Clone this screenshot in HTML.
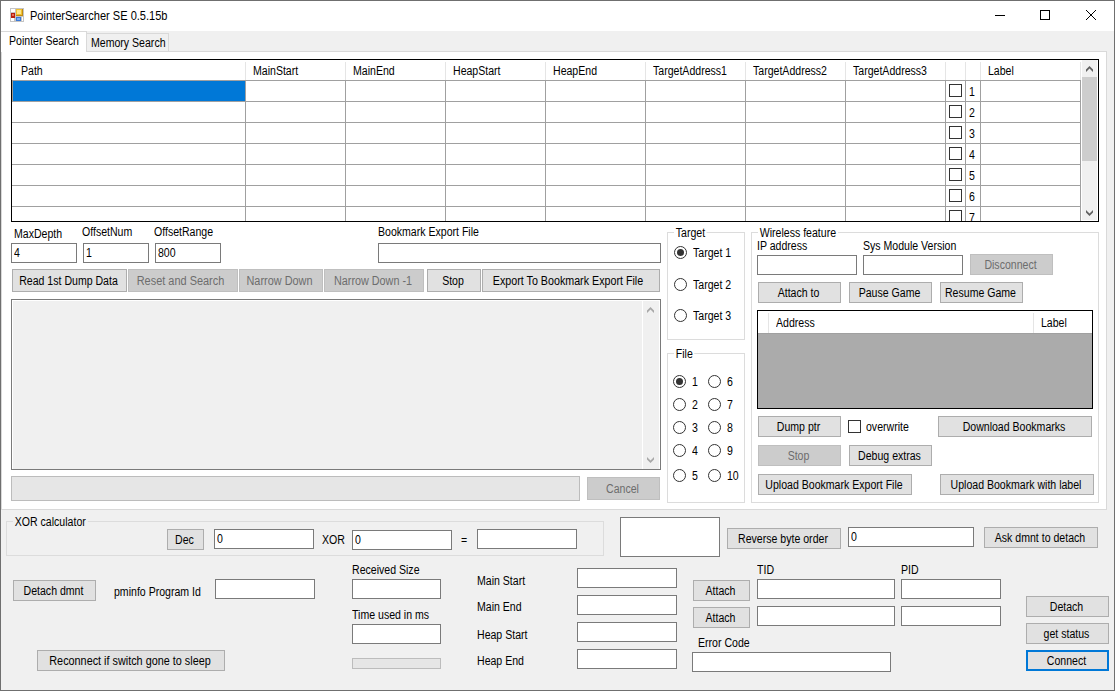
<!DOCTYPE html><html><head><meta charset="utf-8"><style>
*{margin:0;padding:0;box-sizing:border-box}
html,body{width:1115px;height:691px;overflow:hidden;background:#f0f0f0;font-family:"Liberation Sans",sans-serif;font-size:12px;color:#000}
div{position:absolute}
.t{white-space:nowrap;line-height:14px;transform:scaleX(.88);transform-origin:0 0}
.b{background:#e1e1e1;border:1px solid #adadad}
.b span{position:absolute;left:-21px;right:-19px;text-align:center;white-space:nowrap;line-height:14px;transform:scaleX(.88)}
.b.dis{background:#cccccc;border-color:#bfbfbf;color:#6d6d6d}
.b.focus{border:2px solid #0078d7}
.tb{background:#fff;border:1px solid #7a7a7a}
.tb span{position:absolute;left:2px;line-height:14px;white-space:nowrap;transform:scaleX(.88);transform-origin:0 0}
.g{border:1px solid #dcdcdc}
.r{width:13px;height:13px;border:1px solid #333;border-radius:50%;background:#fff}
.r.on::after{content:"";position:absolute;left:2px;top:2px;width:7px;height:7px;border-radius:50%;background:#333}
.cb{width:13px;height:13px;border:1px solid #333;background:#fff}
</style></head><body>

<div class="" style="left:0px;top:0px;width:1115px;height:31px;background:#fff"></div>
<svg style="position:absolute;left:10px;top:8px" width="14" height="14" viewBox="0 0 14 14" shape-rendering="crispEdges">
<rect x="0" y="0" width="14" height="14" fill="#c4c4c4"/>
<rect x="1" y="1" width="4" height="3" fill="#fff"/><rect x="1" y="10" width="3" height="3" fill="#fff"/><rect x="12" y="9" width="1" height="4" fill="#fff"/>
<rect x="1" y="5" width="4" height="5" fill="#b8200f"/><rect x="2" y="6" width="2" height="2" fill="#e8705a"/>
<rect x="6" y="1" width="7" height="7" fill="#c08a10"/><rect x="6" y="1" width="6" height="6" fill="#f0c030"/><rect x="7" y="2" width="4" height="4" fill="#fde68a"/>
<rect x="6" y="9" width="5" height="4" fill="#3a78d8"/><rect x="7" y="10" width="3" height="2" fill="#7fb0f0"/>
</svg>
<div class="t" style="left:30px;top:9px;transform:scaleX(.92)">PointerSearcher SE 0.5.15b</div>
<div class="" style="left:995px;top:15px;width:10px;height:1px;background:#000"></div>
<div class="" style="left:1040px;top:10px;width:10px;height:10px;border:1px solid #000"></div>
<svg style="position:absolute;left:1086px;top:10px" width="10" height="10" viewBox="0 0 10 10" shape-rendering="crispEdges"><path d="M0 0h1v1h-1zM9 0h1v1h-1zM1 1h1v1h-1zM8 1h1v1h-1zM2 2h1v1h-1zM7 2h1v1h-1zM3 3h1v1h-1zM6 3h1v1h-1zM4 4h1v1h-1zM5 4h1v1h-1zM5 5h1v1h-1zM4 5h1v1h-1zM6 6h1v1h-1zM3 6h1v1h-1zM7 7h1v1h-1zM2 7h1v1h-1zM8 8h1v1h-1zM1 8h1v1h-1zM9 9h1v1h-1zM0 9h1v1h-1z" fill="#000"/></svg>
<div class="" style="left:1px;top:51px;width:1106px;height:459px;background:#fff;border:1px solid #d9d9d9"></div>
<div class="" style="left:1px;top:31px;width:86px;height:21px;background:#fff;border-top:1px solid #d9d9d9;border-right:1px solid #d9d9d9"></div>
<div class="" style="left:86px;top:33px;width:83px;height:18px;background:#f0f0f0;border:1px solid #d9d9d9;border-bottom:none"></div>
<div class="" style="left:1px;top:51px;width:85px;height:1px;background:#fff"></div>
<div class="t" style="left:9px;top:34px;">Pointer Search</div>
<div class="t" style="left:91px;top:36px;">Memory Search</div>
<div class="" style="left:11px;top:59px;width:1088px;height:163px;background:#fff;border:1px solid #000;overflow:hidden"></div>
<div class="" style="left:12px;top:80px;width:1069px;height:1px;background:#a0a0a0"></div>
<div class="" style="left:245px;top:62px;width:1px;height:18px;background:#e5e5e5"></div>
<div class="" style="left:245px;top:81px;width:1px;height:140px;background:#a0a0a0"></div>
<div class="" style="left:345px;top:62px;width:1px;height:18px;background:#e5e5e5"></div>
<div class="" style="left:345px;top:81px;width:1px;height:140px;background:#a0a0a0"></div>
<div class="" style="left:445px;top:62px;width:1px;height:18px;background:#e5e5e5"></div>
<div class="" style="left:445px;top:81px;width:1px;height:140px;background:#a0a0a0"></div>
<div class="" style="left:545px;top:62px;width:1px;height:18px;background:#e5e5e5"></div>
<div class="" style="left:545px;top:81px;width:1px;height:140px;background:#a0a0a0"></div>
<div class="" style="left:645px;top:62px;width:1px;height:18px;background:#e5e5e5"></div>
<div class="" style="left:645px;top:81px;width:1px;height:140px;background:#a0a0a0"></div>
<div class="" style="left:745px;top:62px;width:1px;height:18px;background:#e5e5e5"></div>
<div class="" style="left:745px;top:81px;width:1px;height:140px;background:#a0a0a0"></div>
<div class="" style="left:845px;top:62px;width:1px;height:18px;background:#e5e5e5"></div>
<div class="" style="left:845px;top:81px;width:1px;height:140px;background:#a0a0a0"></div>
<div class="" style="left:945px;top:62px;width:1px;height:18px;background:#e5e5e5"></div>
<div class="" style="left:945px;top:81px;width:1px;height:140px;background:#a0a0a0"></div>
<div class="" style="left:965px;top:62px;width:1px;height:18px;background:#e5e5e5"></div>
<div class="" style="left:965px;top:81px;width:1px;height:140px;background:#a0a0a0"></div>
<div class="" style="left:980px;top:62px;width:1px;height:18px;background:#e5e5e5"></div>
<div class="" style="left:980px;top:81px;width:1px;height:140px;background:#a0a0a0"></div>
<div class="" style="left:1080px;top:62px;width:1px;height:18px;background:#e5e5e5"></div>
<div class="" style="left:1080px;top:81px;width:1px;height:140px;background:#a0a0a0"></div>
<div class="" style="left:12px;top:101px;width:1069px;height:1px;background:#a0a0a0"></div>
<div class="" style="left:12px;top:122px;width:1069px;height:1px;background:#a0a0a0"></div>
<div class="" style="left:12px;top:143px;width:1069px;height:1px;background:#a0a0a0"></div>
<div class="" style="left:12px;top:164px;width:1069px;height:1px;background:#a0a0a0"></div>
<div class="" style="left:12px;top:185px;width:1069px;height:1px;background:#a0a0a0"></div>
<div class="" style="left:12px;top:206px;width:1069px;height:1px;background:#a0a0a0"></div>
<div class="" style="left:12px;top:81px;width:1px;height:20px;background:#a09a90"></div>
<div class="" style="left:13px;top:81px;width:232px;height:20px;background:#0078d7"></div>
<div class="t" style="left:21px;top:64px;">Path</div>
<div class="t" style="left:253px;top:64px;">MainStart</div>
<div class="t" style="left:353px;top:64px;">MainEnd</div>
<div class="t" style="left:453px;top:64px;">HeapStart</div>
<div class="t" style="left:553px;top:64px;">HeapEnd</div>
<div class="t" style="left:653px;top:64px;">TargetAddress1</div>
<div class="t" style="left:753px;top:64px;">TargetAddress2</div>
<div class="t" style="left:853px;top:64px;">TargetAddress3</div>
<div class="t" style="left:988px;top:64px;">Label</div>
<div class="cb" style="left:949px;top:84px"></div>
<div style="left:966px;top:81px;width:14px;height:20px;overflow:hidden"><div class="t" style="left:3px;top:4px">1</div></div>
<div class="cb" style="left:949px;top:105px"></div>
<div style="left:966px;top:102px;width:14px;height:20px;overflow:hidden"><div class="t" style="left:3px;top:4px">2</div></div>
<div class="cb" style="left:949px;top:126px"></div>
<div style="left:966px;top:123px;width:14px;height:20px;overflow:hidden"><div class="t" style="left:3px;top:4px">3</div></div>
<div class="cb" style="left:949px;top:147px"></div>
<div style="left:966px;top:144px;width:14px;height:20px;overflow:hidden"><div class="t" style="left:3px;top:4px">4</div></div>
<div class="cb" style="left:949px;top:168px"></div>
<div style="left:966px;top:165px;width:14px;height:20px;overflow:hidden"><div class="t" style="left:3px;top:4px">5</div></div>
<div class="cb" style="left:949px;top:189px"></div>
<div style="left:966px;top:186px;width:14px;height:20px;overflow:hidden"><div class="t" style="left:3px;top:4px">6</div></div>
<div style="left:949px;top:210px;width:13px;height:11px;border:1px solid #333;border-bottom:none;background:#fff"></div>
<div style="left:966px;top:207px;width:14px;height:14px;overflow:hidden"><div class="t" style="left:3px;top:4px">7</div></div>
<div class="" style="left:1081px;top:60px;width:17px;height:160px;background:#f0f0f0;border-left:1px solid #fff;border-right:1px solid #fff"></div>
<div class="" style="left:1082px;top:77px;width:15px;height:84px;background:#cdcdcd"></div>
<svg style="position:absolute;left:1086px;top:66px" width="7" height="6" viewBox="0 0 7 6"><polygon points="0,3.5 3.5,0 7,3.5 7,6 3.5,2.5 0,6" fill="#606060"/></svg>
<svg style="position:absolute;left:1086px;top:210px" width="7" height="6" viewBox="0 0 7 6"><polygon points="0,0 3.5,3.5 7,0 7,2.5 3.5,6 0,2.5" fill="#606060"/></svg>
<div class="t" style="left:14px;top:227px;">MaxDepth</div>
<div class="t" style="left:82px;top:225px;">OffsetNum</div>
<div class="t" style="left:154px;top:225px;">OffsetRange</div>
<div class="tb" style="left:11px;top:243px;width:66px;height:20px;"><span style="top:2px">4</span></div>
<div class="tb" style="left:83px;top:243px;width:66px;height:20px;"><span style="top:2px">1</span></div>
<div class="tb" style="left:155px;top:243px;width:66px;height:20px;"><span style="top:2px">800</span></div>
<div class="t" style="left:378px;top:225px;">Bookmark Export File</div>
<div class="tb" style="left:378px;top:243px;width:283px;height:20px;"></div>
<div class="b" style="left:12px;top:269px;width:115px;height:23px;"><span style="top:4px;left:-21px;right:-19px">Read 1st Dump Data</span></div>
<div class="b dis" style="left:128px;top:269px;width:110px;height:23px;"><span style="top:4px;left:-21px;right:-19px;transform:translateX(-1.5px) scaleX(0.912)">Reset and Search</span></div>
<div class="b dis" style="left:239px;top:269px;width:84px;height:23px;"><span style="top:4px;left:-21px;right:-19px;transform:translateX(-0.5px) scaleX(0.908)">Narrow Down</span></div>
<div class="b dis" style="left:324px;top:269px;width:100px;height:23px;"><span style="top:4px;left:-21px;right:-19px;transform:translateX(0px) scaleX(0.9)">Narrow Down -1</span></div>
<div class="b" style="left:427px;top:269px;width:54px;height:23px;"><span style="top:4px;left:-21px;right:-19px">Stop</span></div>
<div class="b" style="left:482px;top:269px;width:178px;height:23px;"><span style="top:4px;left:-21px;right:-19px;transform:translateX(-2px) scaleX(0.892)">Export To Bookmark Export File</span></div>
<div class="" style="left:11px;top:299px;width:650px;height:171px;background:#f0f0f0;border:1px solid #7a7a7a;box-shadow:inset 1px 1px 0 #fff,inset -1px 0 0 #fff"></div>
<div class="" style="left:642px;top:300px;width:1px;height:169px;background:#fff"></div>
<svg style="position:absolute;left:647px;top:307px" width="7" height="6" viewBox="0 0 7 6"><polygon points="0,3.5 3.5,0 7,3.5 7,6 3.5,2.5 0,6" fill="#a8a8a8"/></svg>
<svg style="position:absolute;left:647px;top:457px" width="7" height="6" viewBox="0 0 7 6"><polygon points="0,0 3.5,3.5 7,0 7,2.5 3.5,6 0,2.5" fill="#a8a8a8"/></svg>
<div class="" style="left:11px;top:476px;width:569px;height:25px;background:#e6e6e6;border:1px solid #bcbcbc"></div>
<div class="b dis" style="left:587px;top:477px;width:73px;height:23px;"><span style="top:4px;left:-21px;right:-19px">Cancel</span></div>
<div class="g" style="left:667px;top:232px;width:78px;height:108px;"></div>
<div class="t" style="left:674px;top:226px;padding:0 2px;background:#fff">Target</div>
<div class="r on" style="left:674px;top:246px"></div>
<div class="r" style="left:674px;top:278px"></div>
<div class="r" style="left:674px;top:309px"></div>
<div class="t" style="left:693px;top:246px;">Target 1</div>
<div class="t" style="left:693px;top:278px;">Target 2</div>
<div class="t" style="left:693px;top:309px;">Target 3</div>
<div class="g" style="left:667px;top:353px;width:78px;height:150px;"></div>
<div class="t" style="left:674px;top:347px;padding:0 2px;background:#fff">File</div>
<div class="r on" style="left:673px;top:375px"></div>
<div class="r" style="left:708px;top:375px"></div>
<div class="t" style="left:692px;top:375px;">1</div>
<div class="t" style="left:727px;top:375px;">6</div>
<div class="r" style="left:673px;top:398px"></div>
<div class="r" style="left:708px;top:398px"></div>
<div class="t" style="left:692px;top:398px;">2</div>
<div class="t" style="left:727px;top:398px;">7</div>
<div class="r" style="left:673px;top:421px"></div>
<div class="r" style="left:708px;top:421px"></div>
<div class="t" style="left:692px;top:421px;">3</div>
<div class="t" style="left:727px;top:421px;">8</div>
<div class="r" style="left:673px;top:444px"></div>
<div class="r" style="left:708px;top:444px"></div>
<div class="t" style="left:692px;top:444px;">4</div>
<div class="t" style="left:727px;top:444px;">9</div>
<div class="r" style="left:673px;top:469px"></div>
<div class="r" style="left:708px;top:469px"></div>
<div class="t" style="left:692px;top:469px;">5</div>
<div class="t" style="left:727px;top:469px;">10</div>
<div class="g" style="left:751px;top:232px;width:348px;height:271px;"></div>
<div class="t" style="left:758px;top:226px;padding:0 2px;background:#fff">Wireless feature</div>
<div class="t" style="left:757px;top:239px;">IP address</div>
<div class="t" style="left:863px;top:239px;">Sys Module Version</div>
<div class="tb" style="left:757px;top:255px;width:100px;height:20px;"></div>
<div class="tb" style="left:863px;top:255px;width:100px;height:20px;"></div>
<div class="b dis" style="left:970px;top:254px;width:83px;height:21px;"><span style="top:3px;left:-21px;right:-19px">Disconnect</span></div>
<div class="b" style="left:758px;top:282px;width:83px;height:21px;"><span style="top:3px;left:-21px;right:-19px">Attach to</span></div>
<div class="b" style="left:849px;top:282px;width:83px;height:21px;"><span style="top:3px;left:-21px;right:-19px">Pause Game</span></div>
<div class="b" style="left:940px;top:282px;width:83px;height:21px;"><span style="top:3px;left:-21px;right:-19px">Resume Game</span></div>
<div class="" style="left:757px;top:310px;width:336px;height:99px;background:#ababab;border:1px solid #000"></div>
<div class="" style="left:758px;top:311px;width:334px;height:23px;background:#fff;border-bottom:1px solid #a0a0a0"></div>
<div class="" style="left:768px;top:313px;width:1px;height:20px;background:#e5e5e5"></div>
<div class="" style="left:1033px;top:313px;width:1px;height:20px;background:#e5e5e5"></div>
<div class="t" style="left:776px;top:316px;">Address</div>
<div class="t" style="left:1041px;top:316px;">Label</div>
<div class="b" style="left:758px;top:416px;width:83px;height:21px;"><span style="top:3px;left:-21px;right:-19px">Dump ptr</span></div>
<div class="cb" style="left:848px;top:420px"></div>
<div class="t" style="left:866px;top:420px;">overwrite</div>
<div class="b" style="left:938px;top:416px;width:154px;height:21px;"><span style="top:3px;left:-21px;right:-19px">Download Bookmarks</span></div>
<div class="b dis" style="left:758px;top:445px;width:83px;height:21px;"><span style="top:3px;left:-21px;right:-19px">Stop</span></div>
<div class="b" style="left:849px;top:445px;width:83px;height:21px;"><span style="top:3px;left:-21px;right:-19px">Debug extras</span></div>
<div class="b" style="left:758px;top:474px;width:154px;height:21px;"><span style="top:3px;left:-21px;right:-19px">Upload Bookmark Export File</span></div>
<div class="b" style="left:940px;top:474px;width:154px;height:21px;"><span style="top:3px;left:-21px;right:-19px">Upload Bookmark with label</span></div>
<div class="g" style="left:6px;top:521px;width:598px;height:35px;"></div>
<div class="t" style="left:13px;top:515px;padding:0 2px;background:#f0f0f0">XOR calculator</div>
<div class="b" style="left:167px;top:529px;width:37px;height:21px;"><span style="top:3px;left:-21px;right:-19px">Dec</span></div>
<div class="tb" style="left:214px;top:529px;width:100px;height:20px;"><span style="top:2px">0</span></div>
<div class="t" style="left:322px;top:533px;">XOR</div>
<div class="tb" style="left:352px;top:530px;width:100px;height:20px;"><span style="top:2px">0</span></div>
<div class="t" style="left:461px;top:533px;">=</div>
<div class="tb" style="left:477px;top:529px;width:100px;height:20px;"></div>
<div class="tb" style="left:620px;top:517px;width:100px;height:40px;"></div>
<div class="b" style="left:727px;top:528px;width:114px;height:21px;"><span style="top:3px;left:-21px;right:-19px">Reverse byte order</span></div>
<div class="tb" style="left:848px;top:527px;width:126px;height:20px;"><span style="top:2px">0</span></div>
<div class="b" style="left:984px;top:527px;width:114px;height:21px;"><span style="top:3px;left:-21px;right:-19px">Ask dmnt to detach</span></div>
<div class="b" style="left:13px;top:580px;width:83px;height:21px;"><span style="top:3px;left:-21px;right:-19px">Detach dmnt</span></div>
<div class="t" style="left:114px;top:585px;">pminfo Program Id</div>
<div class="tb" style="left:215px;top:579px;width:100px;height:20px;"></div>
<div class="t" style="left:352px;top:563px;">Received Size</div>
<div class="tb" style="left:352px;top:579px;width:89px;height:20px;"></div>
<div class="t" style="left:352px;top:608px;">Time used in ms</div>
<div class="tb" style="left:352px;top:624px;width:89px;height:20px;"></div>
<div class="" style="left:352px;top:658px;width:89px;height:11px;background:#e6e6e6;border:1px solid #bcbcbc"></div>
<div class="t" style="left:477px;top:574px;">Main Start</div>
<div class="tb" style="left:577px;top:568px;width:100px;height:20px;"></div>
<div class="t" style="left:477px;top:600px;">Main End</div>
<div class="tb" style="left:577px;top:595px;width:100px;height:20px;"></div>
<div class="t" style="left:477px;top:628px;">Heap Start</div>
<div class="tb" style="left:577px;top:622px;width:100px;height:20px;"></div>
<div class="t" style="left:477px;top:654px;">Heap End</div>
<div class="tb" style="left:577px;top:649px;width:100px;height:20px;"></div>
<div class="b" style="left:693px;top:580px;width:57px;height:21px;"><span style="top:3px;left:-21px;right:-19px">Attach</span></div>
<div class="b" style="left:693px;top:607px;width:57px;height:21px;"><span style="top:3px;left:-21px;right:-19px">Attach</span></div>
<div class="t" style="left:757px;top:563px;">TID</div>
<div class="t" style="left:901px;top:563px;">PID</div>
<div class="tb" style="left:757px;top:579px;width:138px;height:20px;"></div>
<div class="tb" style="left:757px;top:606px;width:138px;height:20px;"></div>
<div class="tb" style="left:901px;top:579px;width:100px;height:20px;"></div>
<div class="tb" style="left:901px;top:606px;width:100px;height:20px;"></div>
<div class="t" style="left:698px;top:636px;">Error Code</div>
<div class="tb" style="left:692px;top:652px;width:199px;height:20px;"></div>
<div class="b" style="left:1026px;top:596px;width:83px;height:21px;"><span style="top:3px;left:-21px;right:-19px">Detach</span></div>
<div class="b" style="left:1026px;top:623px;width:83px;height:21px;"><span style="top:3px;left:-21px;right:-19px">get status</span></div>
<div class="b focus" style="left:1026px;top:650px;width:83px;height:21px;"><span style="top:2px;left:-22px;right:-20px">Connect</span></div>
<div class="b" style="left:37px;top:650px;width:188px;height:21px;"><span style="top:3px;left:-21px;right:-19px;transform:translateX(0px) scaleX(0.903)">Reconnect if switch gone to sleep</span></div>
<div style="left:0;top:0;width:1115px;height:691px;border:1px solid #6f6f6f"></div>
</body></html>
